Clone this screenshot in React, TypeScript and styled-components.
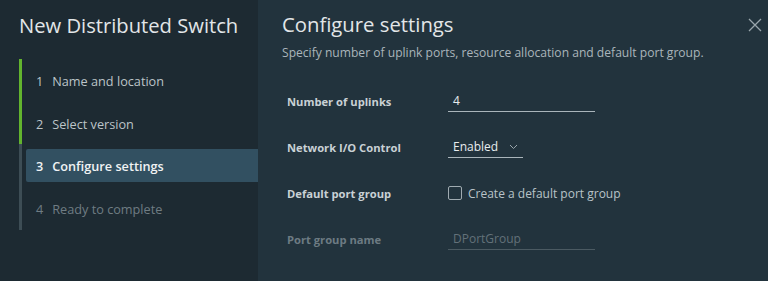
import React from "react";
import styled, {createGlobalStyle} from "styled-components";

const Global = createGlobalStyle`
	html, body {
		margin: 0;
		padding: 0;
		background: #22333d;
	}
	body {
		font-family: "Open Sans", "Noto Sans", sans-serif;
	}
`;

const Wizard = styled.div`
	display: flex;
	width: 768px;
	height: 281px;
	overflow: hidden;
`;

const Sidebar = styled.aside`
	width: 258px;
	flex-shrink: 0;
	background: #1d2a32;
	padding: 12px 0 0 19px;
	box-sizing: border-box;
`;

const WizardTitle = styled.h1`
	margin: 0;
	font-size: 20.2px;
	font-weight: 400;
	color: #e2e6e8;
	line-height: 26px;
	white-space: nowrap;
`;

const StepList = styled.ol`
	list-style: none;
	margin: 21px 0 0;
	padding: 0;
	border-left: 3px solid #3d4d55;
	position: relative;
	display: flex;
	flex-direction: column;
`;

const Progress = styled.span`
	position: absolute;
	left: -3px;
	top: 0;
	width: 3px;
	height: 85px;
	background: #62b42e;
`;

interface StepProps {
	state: "done" | "current" | "todo";
}

const Step = styled.li<StepProps>`
	display: flex;
	gap: 9px;
	align-items: center;
	height: ${p => (p.state === "current" ? "33px" : "43px")};
	margin: ${p => (p.state === "current" ? "4px 0 5px 4px" : "0")};
	padding-left: ${p => (p.state === "current" ? "10px" : "14px")};
	font-size: 12.7px;
	border-radius: ${p => (p.state === "current" ? "2px 0 0 2px" : "0")};
	background: ${p => (p.state === "current" ? "#325061" : "transparent")};
	color: ${p =>
		p.state === "current" ? "#f0f3f4" : p.state === "done" ? "#bcc4c8" : "#6f7c83"};
	font-weight: ${p => (p.state === "current" ? 600 : 400)};
`;

const Main = styled.main`
	flex: 1;
	padding: 10px 0 0 24px;
	position: relative;
`;

const Header = styled.div`
	display: flex;
	justify-content: space-between;
	align-items: flex-start;
`;

const PageTitle = styled.h2`
	margin: 0;
	font-size: 20.3px;
	font-weight: 400;
	color: #e2e6e8;
	line-height: 28px;
`;

const Close = styled.button`
	background: none;
	border: 0;
	padding: 0;
	margin: 8px 6px 0 0;
	width: 14px;
	height: 14px;
	color: #9aa6ac;
	display: flex;
`;

const Subtitle = styled.p`
	margin: 6px 0 0;
	font-size: 12.1px;
	color: #aab5bb;
`;

const Form = styled.div`
	display: grid;
	grid-template-columns: 161px 1fr;
	grid-auto-rows: 46px;
	align-items: center;
	margin: 17px 0 0 5px;
`;

const Label = styled.label<{dim?: boolean}>`
	font-size: 11.2px;
	font-weight: 700;
	color: ${p => (p.dim ? "#6d7b83" : "#c9d1d5")};
`;

const TextField = styled.div<{dim?: boolean}>`
	width: 147px;
	height: 22px;
	box-sizing: border-box;
	border-bottom: 1px solid ${p => (p.dim ? "#4b5a62" : "#aab5bb")};
	font-size: 12px;
	color: ${p => (p.dim ? "#637179" : "#e8ecee")};
	padding: 0 0 0 5px;
	display: flex;
	align-items: center;
`;

const Select = styled(TextField)`
	width: 75px;
	gap: 11px;
	font-size: 12px;
`;

const CheckRow = styled.label`
	display: flex;
	align-items: center;
	gap: 6px;
	font-size: 12px;
	color: #b9c3c8;
`;

const Box = styled.span`
	width: 12px;
	height: 12px;
	border: 1px solid #a0abb1;
	border-radius: 2px;
`;

export default function App() {
	return (
		<>
			<Global />
			<Wizard>
				<Sidebar>
					<WizardTitle>New Distributed Switch</WizardTitle>
					<StepList>
						<Progress />
						<Step state="done"><span>1</span>Name and location</Step>
						<Step state="done"><span>2</span>Select version</Step>
						<Step state="current"><span>3</span>Configure settings</Step>
						<Step state="todo"><span>4</span>Ready to complete</Step>
					</StepList>
				</Sidebar>
				<Main>
					<Header>
						<PageTitle>Configure settings</PageTitle>
						<Close aria-label="Close">
							<svg width="14" height="14" viewBox="0 0 14 14">
								<path d="M1 1L13 13M13 1L1 13" stroke="currentColor" strokeWidth="1.3" />
							</svg>
						</Close>
					</Header>
					<Subtitle>Specify number of uplink ports, resource allocation and default port group.</Subtitle>
					<Form>
						<Label>Number of uplinks</Label>
						<TextField>4</TextField>
						<Label>Network I/O Control</Label>
						<Select>
							Enabled
							<svg width="9" height="6" viewBox="0 0 9 6">
								<path d="M1 1L4.5 4.5L8 1" fill="none" stroke="#9aa6ac" strokeWidth="1" />
							</svg>
						</Select>
						<Label>Default port group</Label>
						<CheckRow>
							<Box />
							Create a default port group
						</CheckRow>
						<Label dim>Port group name</Label>
						<TextField dim>DPortGroup</TextField>
					</Form>
				</Main>
			</Wizard>
		</>
	);
}
